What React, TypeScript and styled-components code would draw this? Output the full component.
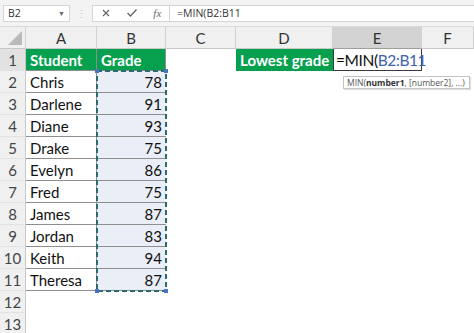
import { Fragment } from "react";
import styled, { createGlobalStyle } from "styled-components";

const GlobalStyle = createGlobalStyle`
  html, body {
    margin: 0;
    padding: 0;
    background: #ffffff;
  }
  body {
    width: 474px;
    height: 333px;
    overflow: hidden;
    font-family: Lato, "Liberation Sans", sans-serif;
  }
`;

const Window = styled.div`
  display: flex;
  flex-direction: column;
  width: 474px;
`;

const FormulaBar = styled.div`
  display: flex;
  align-items: center;
  height: 27px;
  padding: 0 0 0 3px;
  background: #f3f3f3;
  box-sizing: border-box;
  border-bottom: 1px solid #dadada;
  font-family: "Open Sans", "Liberation Sans", sans-serif;
  font-size: 10.5px;
  color: #333;
`;

const NameBox = styled.div`
  display: flex;
  align-items: center;
  justify-content: space-between;
  width: 67px;
  height: 17px;
  padding: 0 4px 0 4px;
  box-sizing: border-box;
  background: #fff;
  border: 1px solid #d4d4d4;
`;

const Caret = styled.span`
  font-size: 7px;
  color: #666;
`;

const Grip = styled.div`
  width: 22px;
  text-align: center;
  color: #c4c4c4;
  font-size: 11px;
  letter-spacing: -1px;
`;

const IconBox = styled.div`
  display: flex;
  align-items: center;
  justify-content: space-around;
  width: 77px;
  height: 17px;
  box-sizing: border-box;
  background: #fff;
  border: 1px solid #d4d4d4;
  border-right: none;
  color: #6a6a6a;
`;

const Fx = styled.span`
  font-family: "Liberation Serif", serif;
  font-style: italic;
  font-size: 11px;
`;

const FormulaInput = styled.div`
  flex: 1;
  display: flex;
  align-items: center;
  height: 17px;
  padding-left: 7px;
  box-sizing: border-box;
  background: #fff;
  border: 1px solid #d4d4d4;
  border-right: none;
`;

const Sheet = styled.div`
  position: relative;
  display: grid;
  grid-template-columns: 26px 71px 69px 70px 97px 89px 52px;
  grid-auto-rows: 22px;
  font-size: 15px;
  color: #111;
`;

const Corner = styled.div`
  position: relative;
  background: #f0f0f0;
  border-right: 1px solid #d0d0d0;
  border-bottom: 1px solid #c8c8c8;
  box-sizing: border-box;
  overflow: hidden;
  &::after {
    content: "";
    position: absolute;
    right: 3px;
    bottom: 3px;
    border-left: 14px solid transparent;
    border-bottom: 14px solid #b9b9b9;
  }
`;

const ColHead = styled.div<{ $active?: boolean }>`
  display: flex;
  align-items: center;
  justify-content: center;
  background: ${(p) => (p.$active ? "#d3d3d3" : "#f0f0f0")};
  border-right: 1px solid #d0d0d0;
  border-bottom: 1px solid ${(p) => (p.$active ? "#9e9e9e" : "#c8c8c8")};
  box-sizing: border-box;
  color: #333;
  font-size: 15px;
`;

const RowHead = styled.div<{ $active?: boolean }>`
  display: flex;
  align-items: center;
  justify-content: center;
  background: ${(p) => (p.$active ? "#e2e2e2" : "#f0f0f0")};
  border-right: 1px solid #c8c8c8;
  border-bottom: 1px solid #e2e2e2;
  box-sizing: border-box;
  color: #444;
  font-size: 15px;
`;

type Kind = "blank" | "head" | "name" | "grade" | "label" | "edit";

const Cell = styled.div<{ $kind: Kind }>`
  display: flex;
  align-items: center;
  box-sizing: border-box;
  padding: 0 4px;
  white-space: nowrap;
  justify-content: ${(p) => (p.$kind === "grade" ? "flex-end" : "flex-start")};
  background: ${(p) =>
    p.$kind === "head" || p.$kind === "label"
      ? "#06a04f"
      : p.$kind === "grade"
        ? "#e9eef7"
        : "#fff"};
  color: ${(p) => (p.$kind === "head" || p.$kind === "label" ? "#fff" : "#111")};
  font-weight: ${(p) => (p.$kind === "head" || p.$kind === "label" ? 700 : 400)};
  border-bottom: ${(p) =>
    p.$kind === "head" || p.$kind === "name" || p.$kind === "grade"
      ? "1px solid #8e8e8e"
      : "none"};
  border-right: ${(p) =>
    p.$kind === "head" || p.$kind === "name" ? "1px solid #8e8e8e" : "none"};
  ${(p) =>
    p.$kind === "edit" &&
    `
    position: relative;
    z-index: 1;
    overflow: visible;
    border: 1px solid #3a3a3a;
    border-top: none;
    padding-left: 2px;
    font-size: 15.5px;
    letter-spacing: -0.4px;
  `}
`;

const RangeRef = styled.span`
  color: #3d62ae;
`;

const TextCursor = styled.span`
  display: inline-block;
  width: 1px;
  height: 17px;
  margin-left: 1px;
  background: #111;
`;

const MarchingAnts = styled.div`
  position: absolute;
  left: 96px;
  top: 43px;
  width: 71px;
  height: 222px;
  pointer-events: none;
`;

const Handle = styled.span<{ $x: "l" | "r"; $y: "t" | "b" }>`
  position: absolute;
  width: 4px;
  height: 4px;
  background: #4a74c2;
  ${(p) => (p.$x === "l" ? "left: -1px;" : "right: -1px;")}
  ${(p) => (p.$y === "t" ? "top: -1px;" : "bottom: -1px;")}
`;

const Tooltip = styled.div`
  position: absolute;
  z-index: 2;
  left: 343px;
  top: 49px;
  height: 11px;
  padding: 0 4px 0 3px;
  display: flex;
  align-items: center;
  background: #fff;
  border: 1px solid #c4c4c4;
  box-shadow: 1px 1px 1px rgba(0, 0, 0, 0.12);
  font-family: "Open Sans", "Liberation Sans", sans-serif;
  font-size: 8.5px;
  color: #555;
  white-space: nowrap;
`;

const Bold = styled.b`
  color: #333;
`;

const columns = ["A", "B", "C", "D", "E", "F"];

const students: [string, number][] = [
  ["Chris", 78],
  ["Darlene", 91],
  ["Diane", 93],
  ["Drake", 75],
  ["Evelyn", 86],
  ["Fred", 75],
  ["James", 87],
  ["Jordan", 83],
  ["Keith", 94],
  ["Theresa", 87],
];

export default function App() {
  return (
    <Window>
      <GlobalStyle />
      <FormulaBar>
        <NameBox>
          B2
          <Caret>▼</Caret>
        </NameBox>
        <Grip>⋮</Grip>
        <IconBox>
          <svg width="10" height="10" viewBox="0 0 10 10">
            <path d="M2 2 L8 8 M8 2 L2 8" stroke="#666" strokeWidth="1.2" />
          </svg>
          <svg width="12" height="10" viewBox="0 0 12 10">
            <path d="M1.5 5 L4.5 8 L10.5 1.5" stroke="#666" strokeWidth="1.4" fill="none" />
          </svg>
          <Fx>fx</Fx>
        </IconBox>
        <FormulaInput>=MIN(B2:B11</FormulaInput>
      </FormulaBar>

      <Sheet>
        <Corner />
        {columns.map((c) => (
          <ColHead key={c} $active={c === "E"}>
            {c}
          </ColHead>
        ))}

        <RowHead $active>1</RowHead>
        <Cell $kind="head">Student</Cell>
        <Cell $kind="head">Grade</Cell>
        <Cell $kind="blank" />
        <Cell $kind="label">Lowest grade</Cell>
        <Cell $kind="edit">
          =MIN(<RangeRef>B2:B11</RangeRef>
          <TextCursor />
        </Cell>
        <Cell $kind="blank" />

        {students.map(([name, grade], i) => (
          <Fragment key={name + i}>
            <RowHead>{i + 2}</RowHead>
            <Cell $kind="name">{name}</Cell>
            <Cell $kind="grade">{grade}</Cell>
            <Cell $kind="blank" />
            <Cell $kind="blank" />
            <Cell $kind="blank" />
            <Cell $kind="blank" />
          </Fragment>
        ))}

        {[12, 13].map((n) => (
          <Fragment key={n}>
            <RowHead>{n}</RowHead>
            {columns.map((c) => (
              <Cell key={c} $kind="blank" />
            ))}
          </Fragment>
        ))}

        <MarchingAnts>
          <svg width="71" height="222" viewBox="0 0 71 222">
            <rect
              x="1"
              y="1"
              width="69"
              height="220"
              fill="none"
              stroke="#2c6b70"
              strokeWidth="2"
              strokeDasharray="5 3"
            />
          </svg>
          <Handle $x="l" $y="t" />
          <Handle $x="r" $y="t" />
          <Handle $x="l" $y="b" />
          <Handle $x="r" $y="b" />
        </MarchingAnts>

        <Tooltip>
          MIN(<Bold>number1</Bold>, [number2], ...)
        </Tooltip>
      </Sheet>
    </Window>
  );
}
